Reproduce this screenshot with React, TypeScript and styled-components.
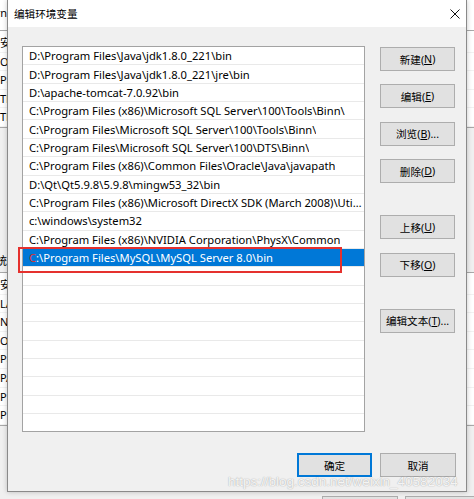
import React from 'react';
import styled, { createGlobalStyle } from 'styled-components';

const GlobalStyle = createGlobalStyle`
  html, body { margin: 0; padding: 0; }
  body {
    font-family: "Noto Sans", "Noto Sans CJK SC", sans-serif;
    background: #f0f0f0;
  }
`;

const UI_FONT = `"Noto Sans", "Noto Sans CJK SC", sans-serif`;

/* ---------- desktop & the window behind the dialog ---------- */

const Desktop = styled.div`
  position: relative;
  width: 474px;
  height: 499px;
  overflow: hidden;
  background: #f0f0f0;
  font-family: ${UI_FONT};
`;

const BackWindow = styled.div`
  position: absolute;
  left: 0;
  top: 0;
  width: 481px;
  height: 530px;
  display: flex;
  flex-direction: column;
  background: #f0f0f0;
  font-size: 11px;
  color: #000;
`;

/* the back window's caption and name column only peek out beside the dialog */
const BackCaption = styled.div`
  height: 30px;
  background: #fff;
  overflow: hidden;
`;

const CaptionText = styled.div`
  width: 7px;
  overflow: hidden;
  white-space: nowrap;
  direction: rtl;
  line-height: 26px;
`;

const BackList = styled.div<{ $top: number }>`
  margin-top: ${(p) => p.$top}px;
  background: #fff;
  border-top: 1px solid #a8a8a8;
  border-bottom: 1px solid #a8a8a8;
  padding-top: 3px;
  display: flex;
  flex-direction: column;
`;

const BackRow = styled.div`
  height: 18.6px;
  line-height: 18.6px;
  border-bottom: 1px solid #f2f2f2;
  box-sizing: border-box;
`;

const NameCell = styled.div`
  width: 7px;
  overflow: hidden;
  white-space: nowrap;
`;

const BackLabel = styled.div`
  margin-top: 126px;
  height: 14px;
  line-height: 14px;
  width: 7px;
  overflow: hidden;
  white-space: nowrap;
  direction: rtl;
`;

const BackFooter = styled.div`
  margin-top: auto;
  height: 34px;
  display: flex;
  justify-content: flex-end;
  gap: 7px;
`;

const BackButton = styled.div`
  width: 76px;
  height: 24px;
  box-sizing: border-box;
  border: 1px solid #adadad;
  background: #e1e1e1;
`;

/* ---------- the dialog ---------- */

const Dialog = styled.section`
  position: absolute;
  left: 7px;
  top: 0;
  width: 460px;
  height: 492px;
  box-sizing: border-box;
  border: 1px solid #8a8a8a;
  border-top: none;
  background: #f0f0f0;
  display: flex;
  flex-direction: column;
  box-shadow: 0 0 5px rgba(0, 0, 0, 0.22);
`;

const TitleBar = styled.header`
  height: 27px;
  flex: none;
  background: #fff;
  display: flex;
  align-items: center;
  justify-content: space-between;
  padding: 0 6px;
`;

const Title = styled.span`
  font-size: 10.6px;
  color: #000;
`;

const CloseGlyph = styled.svg`
  width: 10px;
  height: 10px;
  display: block;
`;

const Body = styled.div`
  flex: 1;
  display: flex;
  flex-direction: column;
`;

const Main = styled.div`
  display: flex;
  gap: 15px;
  padding: 19px 0 0 14px;
`;

const ListFrame = styled.div`
  position: relative;
  width: 343px;
  height: 386px;
`;

const List = styled.div`
  width: 100%;
  height: 100%;
  box-sizing: border-box;
  border: 1px solid #a3a3a3;
  background: #fff;
  overflow: hidden;
  display: flex;
  flex-direction: column;
`;

const Row = styled.div<{ $selected?: boolean }>`
  flex: none;
  height: 18.37px;
  box-sizing: border-box;
  border-bottom: 1px solid #e9e9e9;
  padding: 0 1px 0 6px;
  display: flex;
  align-items: center;
  font-size: 11.2px;
  color: ${(p) => (p.$selected ? '#fff' : '#000')};
  background: ${(p) => (p.$selected ? '#0078d7' : 'transparent')};
`;

const RowText = styled.span`
  overflow: hidden;
  text-overflow: ellipsis;
  white-space: nowrap;
  min-width: 0;
`;

const Caret = styled.span`
  color: #e0332c;
`;

const Annotation = styled.div`
  position: absolute;
  left: -4px;
  top: 201px;
  width: 324px;
  height: 26px;
  box-sizing: border-box;
  border: 2px solid #e5312e;
  pointer-events: none;
`;

const ButtonColumn = styled.div`
  width: 75px;
  padding-top: 1px;
  display: flex;
  flex-direction: column;
  gap: 13.4px;
`;

const Button = styled.button<{ $default?: boolean; $after?: number; $w?: number }>`
  width: ${(p) => p.$w ?? 75}px;
  height: 24px;
  margin: ${(p) => (p.$after ? `${p.$after}px 0 0 0` : '0')};
  padding: 0;
  box-sizing: border-box;
  border: ${(p) => (p.$default ? '2px solid #0078d7' : '1px solid #adadad')};
  background: #e1e1e1;
  font-family: ${UI_FONT};
  font-size: 10.6px;
  color: #000;
  display: flex;
  align-items: center;
  justify-content: center;
  white-space: nowrap;
`;

const Key = styled.u`
  text-decoration-thickness: 1px;
  text-underline-offset: 1px;
`;

const Footer = styled.div`
  display: flex;
  justify-content: flex-end;
  gap: 8px;
  padding: 21px 10px 0 0;
`;

const Watermark = styled.div`
  position: absolute;
  left: 228px;
  top: 474px;
  font-family: "Liberation Sans", sans-serif;
  font-size: 13.5px;
  color: rgba(255, 255, 255, 0.9);
  text-shadow: 0 0 1px rgba(0, 0, 0, 0.3), 0 0 2px rgba(0, 0, 0, 0.12);
  white-space: nowrap;
  pointer-events: none;
`;

const paths = [
  'D:\\Program Files\\Java\\jdk1.8.0_221\\bin',
  'D:\\Program Files\\Java\\jdk1.8.0_221\\jre\\bin',
  'D:\\apache-tomcat-7.0.92\\bin',
  'C:\\Program Files (x86)\\Microsoft SQL Server\\100\\Tools\\Binn\\',
  'C:\\Program Files\\Microsoft SQL Server\\100\\Tools\\Binn\\',
  'C:\\Program Files\\Microsoft SQL Server\\100\\DTS\\Binn\\',
  'C:\\Program Files (x86)\\Common Files\\Oracle\\Java\\javapath',
  'D:\\Qt\\Qt5.9.8\\5.9.8\\mingw53_32\\bin',
  'C:\\Program Files (x86)\\Microsoft DirectX SDK (March 2008)\\Utilities\\bin\\x86',
  'c:\\windows\\system32',
  'C:\\Program Files (x86)\\NVIDIA Corporation\\PhysX\\Common',
  'C:\\Program Files\\MySQL\\MySQL Server 8.0\\bin',
];
const SELECTED = 11;
const VISIBLE_ROWS = 21;

const userVars = ['安装目录', 'OneDrive', 'Path', 'TEMP', 'TMP'];
const systemVars = [
  '安装目录',
  'LANG',
  'NUMBER_OF_PROCESSORS',
  'OS',
  'Path',
  'PATHEXT',
  'PROCESSOR_ARCHITECTURE',
  'PROCESSOR_IDENTIFIER',
];

type Action = { label: string; key: string; suffix?: string; after?: number };
const actions: Action[] = [
  { label: '新建', key: 'N' },
  { label: '编辑', key: 'E' },
  { label: '浏览', key: 'B', suffix: '...' },
  { label: '删除', key: 'D' },
  { label: '上移', key: 'U', after: 18.6 },
  { label: '下移', key: 'O' },
  { label: '编辑文本', key: 'T', suffix: '...', after: 18.6 },
];

export default function App() {
  const rows = Array.from({ length: VISIBLE_ROWS }, (_, i) => paths[i] ?? '');
  return (
    <Desktop>
      <GlobalStyle />
      <BackWindow>
        <BackCaption>
          <CaptionText>rn</CaptionText>
        </BackCaption>
        <BackList $top={0}>
          {userVars.map((v) => (
            <BackRow key={v}>
              <NameCell>{v}</NameCell>
            </BackRow>
          ))}
        </BackList>
        <BackLabel>系统</BackLabel>
        <BackList $top={4}>
          {systemVars.map((v) => (
            <BackRow key={v}>
              <NameCell>{v}</NameCell>
            </BackRow>
          ))}
        </BackList>
        <BackFooter>
          <BackButton />
          <BackButton />
        </BackFooter>
      </BackWindow>

      <Dialog>
        <TitleBar>
          <Title>编辑环境变量</Title>
          <CloseGlyph viewBox="0 0 10 10">
            <path d="M0.5 0.5 L9.5 9.5 M9.5 0.5 L0.5 9.5" stroke="#111" strokeWidth="1" fill="none" />
          </CloseGlyph>
        </TitleBar>
        <Body>
          <Main>
            <ListFrame>
              <List>
                {rows.map((text, i) => (
                  <Row key={i} $selected={i === SELECTED}>
                    <RowText>
                      {i === SELECTED ? (
                        <>
                          <Caret>{text[0]}</Caret>
                          {text.slice(1)}
                        </>
                      ) : (
                        text
                      )}
                    </RowText>
                  </Row>
                ))}
              </List>
              <Annotation />
            </ListFrame>
            <ButtonColumn>
              {actions.map((a) => (
                <Button key={a.label} $after={a.after}>
                  {a.label}(<Key>{a.key}</Key>){a.suffix}
                </Button>
              ))}
            </ButtonColumn>
          </Main>
          <Footer>
            <Button $default $w={75}>确定</Button>
            <Button $w={76}>取消</Button>
          </Footer>
        </Body>
      </Dialog>

      <Watermark>https://blog.csdn.net/weixin_40582034</Watermark>
    </Desktop>
  );
}
